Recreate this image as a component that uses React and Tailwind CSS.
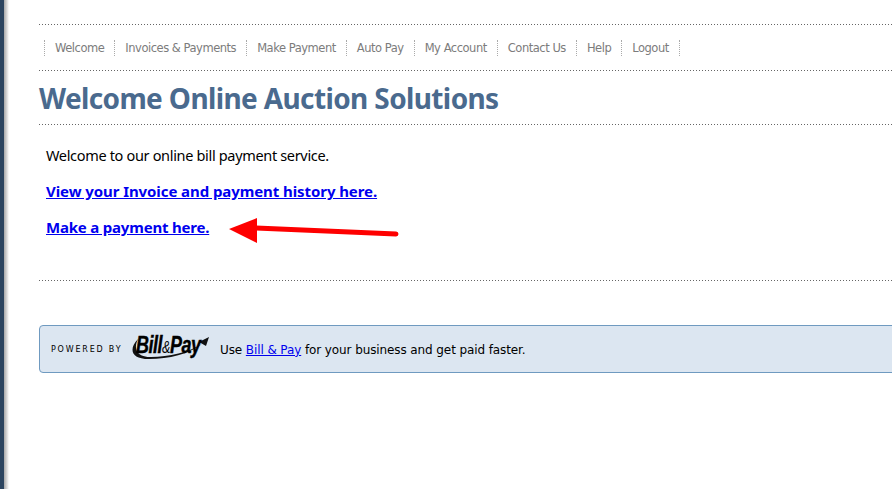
function Rule() {
  return <div className="h-px w-full shrink-0 bg-[linear-gradient(to_right,#666666_1px,transparent_1px)] bg-[length:3px_1px]" />;
}

export default function App() {
  const items = ["Welcome", "Invoices & Payments", "Make Payment", "Auto Pay", "My Account", "Contact Us", "Help", "Logout"];
  return (
    <div className="relative flex h-[489px] w-[892px] overflow-hidden bg-white font-['DejaVu_Sans',sans-serif]">
      <div className="h-full w-[4px] shrink-0 bg-[#2c4560]" />
      <div className="h-full w-[5px] shrink-0 bg-gradient-to-r from-[#a9a9a9] to-white" />
      <main className="flex min-w-0 flex-1 flex-col pl-[30px] pt-[24px]">
        <Rule />
        <nav className="flex h-[45px] items-center pl-[5px] pt-[1px]">
          <ul className="flex items-center border-l border-dotted border-l-[#aaaaaa]">
            {items.map((t) => (
              <li key={t} className="flex h-[16px] items-center border-r border-dotted border-r-[#aaaaaa] px-[10px] pt-[2px] text-[11.5px] tracking-[-0.47px] text-[#7c7c7c]">
                {t}
              </li>
            ))}
          </ul>
        </nav>
        <Rule />
        <h1 className="flex h-[53px] items-center whitespace-nowrap font-['Noto_Sans',sans-serif] text-[28px] font-bold tracking-[-0.62px] text-[#4a6a8e]">
          Welcome Online Auction Solutions
        </h1>
        <Rule />
        <section className="flex h-[155px] flex-col pl-[7px] pt-[21px] font-['Noto_Sans',sans-serif] leading-[18px] text-black">
          <p className="text-[14.5px] tracking-[-0.33px]">Welcome to our online bill payment service.</p>
          <a href="#" className="mt-[18px] w-fit text-[15px] font-bold tracking-[-0.08px] text-[#0000ee] underline">View your Invoice and payment history here.</a>
          <a href="#" className="mt-[18px] w-fit text-[15px] font-bold tracking-[-0.2px] text-[#0000ee] underline">Make a payment here.</a>
        </section>
        <Rule />
        <footer className="mt-[44px] flex h-[48px] w-[900px] items-center rounded-[4px] border border-[#6f9ac0] bg-[#dce6f1] pl-[11px] pt-[1px]">
          <span className="w-[71px] whitespace-nowrap pt-[1px] text-[8px] tracking-[1.8px] text-black">POWERED BY</span>
          <span className="relative ml-[9px] flex h-[36px] w-[79px] items-center">
            <svg className="absolute left-0 top-0" width="79" height="36" viewBox="0 0 79 36" fill="none">
              <path d="M7 7 C-2 16 -1 27 18 27 C38 27 58 22 71 12 C58 20 38 25 20 25 C6 25 2 17 7 7 Z" fill="#111111" />
              <path d="M68 10 L78 5 L75 14 Z" fill="#111111" />
            </svg>
            <span className="relative ml-[5px] -mt-[9px] origin-left scale-x-[0.78] whitespace-nowrap font-['Liberation_Sans',sans-serif] text-[23px] font-bold italic tracking-[-0.6px] text-black [-webkit-text-stroke:0.4px_black]">Bill<span className="text-[16px] font-normal [-webkit-text-stroke:0px_black]">&amp;</span>Pay</span>
          </span>
          <span className="ml-[10px] whitespace-nowrap text-[12px] tracking-[-0.1px] text-black">
            Use <a href="#" className="text-[#0000ee] underline">Bill &amp; Pay</a> for your business and get paid faster.
          </span>
        </footer>
      </main>
      <svg className="absolute left-[225px] top-[214px]" width="180" height="32" viewBox="0 0 180 32" fill="none">
        <path d="M31 14 L171 20" stroke="#fe0000" strokeWidth="5" strokeLinecap="round" />
        <path d="M4 15 L32 4 L32 29 Z" fill="#fe0000" />
      </svg>
    </div>
  );
}
